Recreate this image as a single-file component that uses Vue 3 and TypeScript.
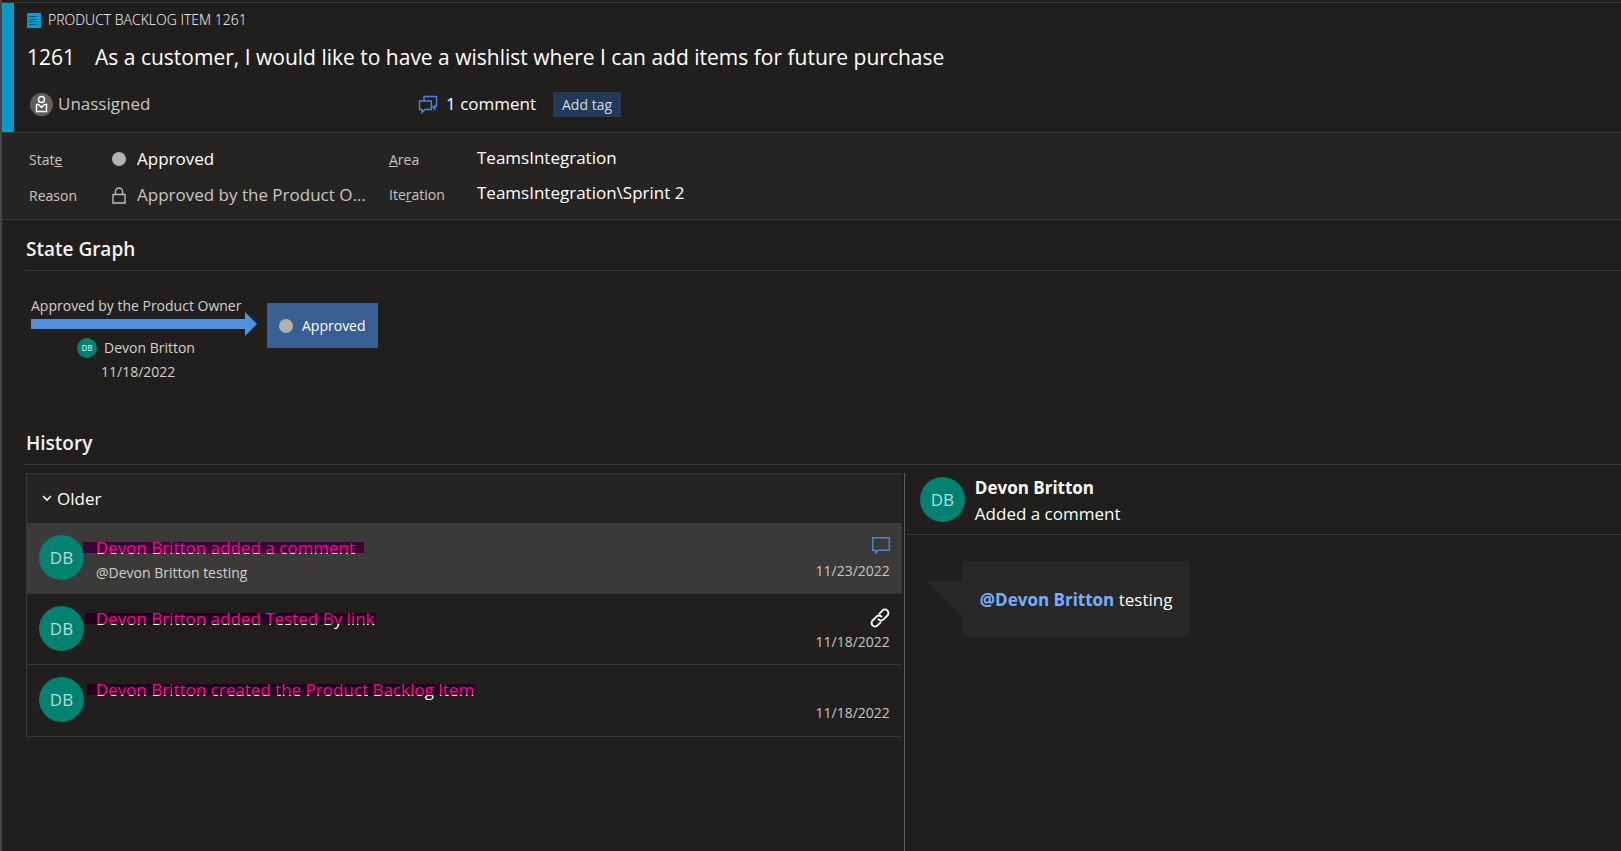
<script setup lang="ts">
interface HistoryEntry {
  title: string
  note?: string
  date: string
  icon?: 'comment' | 'link'
  selected?: boolean
  markBefore: number
  markAfter: number
}

const entries: HistoryEntry[] = [
  { title: 'Devon Britton added a comment', note: '@Devon Britton testing', date: '11/23/2022', icon: 'comment', selected: true, markBefore: 13, markAfter: 9 },
  { title: 'Devon Britton added Tested By link', date: '11/18/2022', icon: 'link', markBefore: 11, markAfter: 1 },
  { title: 'Devon Britton created the Product Backlog Item', date: '11/18/2022', markBefore: 9, markAfter: 1 },
]
</script>

<template>
  <main class="work-item">
    <header class="head">
      <div class="kind">
        <svg width="14" height="15" viewBox="0 0 14 15" aria-hidden="true">
          <rect width="14" height="15" fill="#009ccc" />
          <path d="M2 3.5h7M2 6.5h7M2 8.5h7M2 11.5h7M10 3.5h1M10 6.5h1M10 8.5h1M10 11.5h1" stroke="#1b4f72" />
        </svg>
        <a href="#">PRODUCT BACKLOG ITEM 1261</a>
      </div>
      <h1><span>1261</span><span>As a customer, I would like to have a wishlist where I can add items for future purchase</span></h1>
      <div class="meta">
        <button class="assignee" type="button">
          <svg width="23" height="23" viewBox="0 0 23 23" fill="none" aria-hidden="true">
            <circle cx="11.5" cy="11.5" r="11.5" fill="#605e5c" />
            <circle cx="11.5" cy="6.5" r="3" stroke="#fff" stroke-width="1.5" />
            <path d="M6.5 11.5h2l3 3 3-3h2v7h-10z" stroke="#fff" stroke-width="1.5" />
          </svg>
          Unassigned
        </button>
        <button class="comments" type="button">
          <svg width="20" height="19" viewBox="0 0 20 19" fill="none" stroke="#4a86dc" stroke-width="1.4" aria-hidden="true">
            <path d="M6 6V1.5h12.5V11h-1.8v3l-3-3" />
            <path d="M1.5 6h11.800v8.500H7l-3 3v-3H1.500z" />
          </svg>
          1 comment
        </button>
        <button class="tag" type="button">Add tag</button>
      </div>
    </header>

    <section class="fields">
      <dl class="col">
        <dt>Stat<u>e</u></dt>
        <dd class="value"><i class="dot"></i><span>Approved</span></dd>
        <dt>Reason</dt>
        <dd class="value dim">
          <svg class="lock" width="14" height="17" viewBox="0 0 14 17" fill="none" stroke="#bdbbb9" stroke-width="1.4" aria-hidden="true">
            <path d="M1 7.5h12v8.5H1zM3.5 7.5V4.5a3.5 3.5 0 0 1 7 0v3" />
          </svg>
          <span>Approved by the Product Owner</span>
        </dd>
      </dl>
      <dl class="col paths">
        <dt><u>A</u>rea</dt>
        <dd>TeamsIntegration</dd>
        <dt>Ite<u>r</u>ation</dt>
        <dd>TeamsIntegration\Sprint 2</dd>
      </dl>
    </section>

    <section class="graph">
      <h2>State Graph</h2>
      <div class="flow">
        <div class="step">
          <span class="reason">Approved by the Product Owner</span>
          <svg class="arrow" width="226" height="24" viewBox="0 0 226 24" aria-hidden="true">
            <path d="M0 7h214V0l12 12-12 12v-7H0z" fill="#5190dc" />
          </svg>
          <span class="who"><i class="avatar tiny">DB</i>Devon Britton</span>
          <time>11/18/2022</time>
        </div>
        <div class="state"><i class="dot"></i>Approved</div>
      </div>
    </section>

    <section class="history">
      <h2>History</h2>
      <div class="split">
        <div class="left">
          <div class="list">
            <button class="group" type="button">
              <svg width="10" height="7" viewBox="0 0 10 7" fill="none" stroke="#fff" stroke-width="1.6" aria-hidden="true"><path d="M1 1l4 4 4-4" /></svg>
              Older
            </button>
            <article v-for="e in entries" :key="e.title" class="entry" :class="{ selected: e.selected }">
              <i class="avatar">DB</i>
              <div class="text">
                <span class="title" :style="{ '--before': -e.markBefore + 'px', '--after': -e.markAfter + 'px' }">{{ e.title }}</span>
                <span v-if="e.note" class="note">{{ e.note }}</span>
              </div>
              <div class="side">
                <svg v-if="e.icon === 'comment'" width="18" height="17" viewBox="0 0 18 17" fill="none" stroke="#4a86dc" stroke-width="1.4" aria-hidden="true">
                  <path d="M.7.7h16.6v12.6H6.5L3.7 16v-2.7h-3z" />
                </svg>
                <svg v-else-if="e.icon === 'link'" width="20" height="20" viewBox="0 0 20 20" fill="none" stroke="#fff" stroke-width="1.9" aria-hidden="true">
                  <g transform="rotate(-45 10 10)">
                    <path d="M8 13.5H3a3.5 3.5 0 0 1 0-7h5.5a3.5 3.5 0 0 1 3.5 3.5v.8" />
                    <path d="M12 6.5h5a3.5 3.5 0 0 1 0 7h-5.500a3.500 3.500 0 0 1-3.500-3.500v-.8" />
                  </g>
                </svg>
                <time>{{ e.date }}</time>
              </div>
            </article>
          </div>
        </div>
        <div class="detail">
          <div class="author">
            <i class="avatar">DB</i>
            <div><strong>Devon Britton</strong><span>Added a comment</span></div>
          </div>
          <div class="bubble"><a href="#">@Devon Britton</a> testing</div>
        </div>
      </div>
    </section>
  </main>
</template>

<style>
body { margin: 0; background: #201f1e; }
</style>

<style scoped>
.work-item {
  box-sizing: border-box;
  min-height: 100vh;
  display: flex;
  flex-direction: column;
  border-left: 2px solid #484644;
  padding-top: 2px;
  background: #201f1e;
  color: #fff;
  font: 17px/24px "Open Sans", "Noto Sans", sans-serif;
}
button { font: inherit; color: inherit; background: none; border: 0; padding: 0; }
a { color: inherit; text-decoration: none; }
dl, dd, h1, h2 { margin: 0; }
.head {
  border-top: 1px solid #3b3a39;
  border-bottom: 1px solid #3b3a39;
  padding: 7px 0 14px 25px;
  background: linear-gradient(#009ccc, #009ccc) left / 12px 100% no-repeat;
}
.kind { display: flex; align-items: center; gap: 7px; height: 20px; font-size: 14px; font-weight: 300; }
h1 { display: flex; gap: 20px; margin-top: 11px; font-size: 21px; font-weight: 400; line-height: 32px; }
.meta { display: flex; align-items: center; margin-top: 17px; padding-left: 3px; height: 28px; }
.assignee { display: flex; align-items: center; gap: 5px; width: 388px; color: #c8c6c4; }
.comments { display: flex; align-items: center; gap: 8px; }
.tag { margin-left: 17px; padding: 0 9px; background: #233a5a; color: #d6d9de; font-size: 14px; line-height: 25px; }

.fields { display: flex; gap: 18px; padding: 8px 0 6px 27px; background: #252423; border-bottom: 1px solid #3b3a39; }
.col { display: grid; grid-template-columns: 83px 259px; grid-auto-rows: 36px; align-items: center; }
.paths { grid-template-columns: 88px auto; grid-auto-rows: 35px; align-content: start; }
.paths dd { padding-bottom: 1px; }
dt { padding-top: 2px; color: #c8c6c4; font-size: 14px; }
.value { display: flex; align-items: center; gap: 11px; }
.value span { white-space: nowrap; overflow: hidden; text-overflow: ellipsis; }
.dim { color: #c8c6c4; }
.dot { flex: none; width: 14px; height: 14px; border-radius: 50%; background: #b2b2b2; }
.lock { flex: none; }

h2 { margin-left: 23px; padding: 1px 1px 7px; border-bottom: 1px solid #3b3a39; font-size: 19px; font-weight: 600; line-height: 28px; color: #f3f2f1; }
.graph { padding-top: 14px; }
.flow { display: flex; align-items: flex-start; gap: 10px; padding: 24px 0 0 29px; font-size: 14px; }
.step { display: flex; flex-direction: column; width: 226px; color: #d2d0ce; }
.reason { line-height: 22px; margin-bottom: -5px; white-space: nowrap; }
.arrow { display: block; }
.who { display: flex; align-items: center; gap: 7px; margin-left: 46px; line-height: 24px; }
.step time { margin-left: 70px; line-height: 24px; }
.state { display: flex; align-items: center; gap: 9px; height: 45px; margin-top: 8px; padding: 0 12px; background: #375f92; }
.avatar {
  flex: none;
  width: 45px;
  height: 45px;
  border-radius: 50%;
  background: #008272;
  color: #b5ddd8;
  font-size: 17px;
  font-style: normal;
  line-height: 45px;
  text-align: center;
}
.avatar.tiny { width: 20px; height: 20px; line-height: 20px; font-size: 8px; font-weight: 600; }

.history { flex: 1; display: flex; flex-direction: column; padding-top: 44px; }
.split { flex: 1; display: grid; grid-template-columns: 551fr 449fr; margin: 8px 0 0 24px; }
.left { padding-right: 2px; border-right: 1px solid #605e5c; }
.list { border: 1px solid #3b3a39; border-right: 0; }
.group { display: flex; align-items: center; gap: 5px; box-sizing: border-box; width: 100%; height: 49px; padding-left: 15px; background: #252423; }
.entry { --mark-base: #211f34; display: flex; box-sizing: border-box; height: 71px; padding: 12px 12px 11px; border-bottom: 1px solid #3b3a39; }
.entry:last-child { border-bottom: 0; padding-bottom: 12px; }
.selected { --mark-base: #3b3a64; background: #3b3a39; }
.text { flex: 1; display: flex; flex-direction: column; align-items: flex-start; padding-left: 12px; }
.title { position: relative; isolation: isolate; line-height: 26px; }
.title::before,
.title::after {
  content: "";
  position: absolute;
  top: 7px;
  height: 11px;
  left: var(--before);
  right: var(--after);
}
.title::before { z-index: -1; background: var(--mark-base); }
.title::after { background: #ff0090; mix-blend-mode: multiply; }
.note { font-size: 14px; color: #d2d0ce; }
.side { display: flex; flex-direction: column; align-items: flex-end; font-size: 14px; line-height: 22px; color: #c8c6c4; padding-top: 2px; }
.side time { margin-top: auto; }

.detail { margin-left: 2px; }
.author { display: flex; gap: 10px; padding: 4px 13px 8px; border-bottom: 1px solid #3b3a39; height: 49px; }
.author div { display: flex; flex-direction: column; line-height: 26px; margin-top: -2px; }
.author strong { font-weight: 700; }
.bubble {
  position: relative;
  width: fit-content;
  margin: 26px 0 0 55px;
  padding: 27px 18px 25px;
  border-radius: 6px;
  background: #292827;
}
.bubble a { color: #75b0ff; font-weight: 700; }
.bubble::before {
  content: "";
  position: absolute;
  top: 20px;
  right: 100%;
  width: 36px;
  height: 36px;
  background: #292827;
  clip-path: polygon(0 0, 100% 0, 100% 100%);
}
</style>
